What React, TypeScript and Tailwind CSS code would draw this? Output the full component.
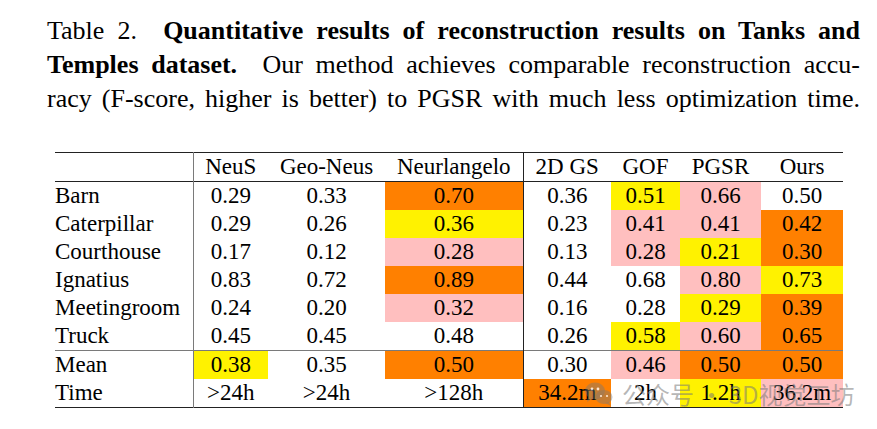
import React from 'react';

type Cell = { v: string; c?: 'o' | 'y' | 'p' };

const cols = ['NeuS', 'Geo-Neus', 'Neurlangelo', '2D GS', 'GOF', 'PGSR', 'Ours'];
const widths = ['w-[138px]', 'w-[75px]', 'w-[117px]', 'w-[138px]', 'w-[88px]', 'w-[69px]', 'w-[81px]', 'w-[82px]'];

const rows: { name: string; cells: Cell[] }[] = [
  { name: 'Barn', cells: [{ v: '0.29' }, { v: '0.33' }, { v: '0.70', c: 'o' }, { v: '0.36' }, { v: '0.51', c: 'y' }, { v: '0.66', c: 'p' }, { v: '0.50' }] },
  { name: 'Caterpillar', cells: [{ v: '0.29' }, { v: '0.26' }, { v: '0.36', c: 'y' }, { v: '0.23' }, { v: '0.41', c: 'p' }, { v: '0.41', c: 'p' }, { v: '0.42', c: 'o' }] },
  { name: 'Courthouse', cells: [{ v: '0.17' }, { v: '0.12' }, { v: '0.28', c: 'p' }, { v: '0.13' }, { v: '0.28', c: 'p' }, { v: '0.21', c: 'y' }, { v: '0.30', c: 'o' }] },
  { name: 'Ignatius', cells: [{ v: '0.83' }, { v: '0.72' }, { v: '0.89', c: 'o' }, { v: '0.44' }, { v: '0.68' }, { v: '0.80', c: 'p' }, { v: '0.73', c: 'y' }] },
  { name: 'Meetingroom', cells: [{ v: '0.24' }, { v: '0.20' }, { v: '0.32', c: 'p' }, { v: '0.16' }, { v: '0.28' }, { v: '0.29', c: 'y' }, { v: '0.39', c: 'o' }] },
  { name: 'Truck', cells: [{ v: '0.45' }, { v: '0.45' }, { v: '0.48' }, { v: '0.26' }, { v: '0.58', c: 'y' }, { v: '0.60', c: 'p' }, { v: '0.65', c: 'o' }] },
];

const summary: { name: string; cells: Cell[] }[] = [
  { name: 'Mean', cells: [{ v: '0.38', c: 'y' }, { v: '0.35' }, { v: '0.50', c: 'o' }, { v: '0.30' }, { v: '0.46', c: 'p' }, { v: '0.50', c: 'o' }, { v: '0.50', c: 'o' }] },
  { name: 'Time', cells: [{ v: '>24h' }, { v: '>24h' }, { v: '>128h' }, { v: '34.2m', c: 'o' }, { v: '2h' }, { v: '1.2h', c: 'y' }, { v: '36.2m', c: 'p' }] },
];

const bg = (c?: string) =>
  c === 'o' ? 'bg-[#ff8000]' : c === 'y' ? 'bg-[#fff200]' : c === 'p' ? 'bg-[#ffbfbf]' : '';

const Row = ({ name, cells, first }: { name: string; cells: Cell[]; first?: boolean }) => (
  <tr className={first ? 'border-t border-[#7a7a7a]' : ''}>
    <td className="h-[28px] p-0 text-left border-r border-[#7a7a7a]">{name}</td>
    {cells.map((cell, i) => (
      <td
        key={i}
        className={`h-[28px] p-0 text-center ${bg(cell.c)} ${i === 2 ? 'border-r border-[#222]' : ''}`}
      >
        {cell.v}
      </td>
    ))}
  </tr>
);

const line = 'block whitespace-nowrap text-justify [text-align-last:justify]';

const App: React.FC = () => {
  return (
    <div className="relative w-[877px] h-[429px] bg-white text-black font-[family-name:'Liberation_Serif',serif]">
      {/* caption */}
      <div className="ml-[47px] pt-[14px] w-[813px] text-[26px] leading-[34px]">
        <span className={line}>
          Table 2.&nbsp; <b>Quantitative results of reconstruction results on Tanks and</b>
        </span>
        <span className={line}>
          <b>Temples dataset.</b>&nbsp; Our method achieves comparable reconstruction accu-
        </span>
        <span className={line}>racy (F-score, higher is better) to PGSR with much less optimization time.</span>
      </div>

      {/* table */}
      <table className="ml-[55px] mt-[36px] border-collapse table-fixed text-[23px] leading-[28px] w-[788px]">
        <colgroup>
          {widths.map((w, i) => (
            <col key={i} className={w} />
          ))}
        </colgroup>
        <thead>
          <tr className="border-t border-b border-[#222]">
            <th className="h-[29px] p-0 font-normal border-r border-[#7a7a7a]"></th>
            {cols.map((c, i) => (
              <th key={c} className={`h-[29px] p-0 font-normal text-center ${i === 2 ? 'border-r border-[#222]' : ''}`}>
                {c}
              </th>
            ))}
          </tr>
        </thead>
        <tbody>
          {rows.map((r) => (
            <Row key={r.name} name={r.name} cells={r.cells} />
          ))}
        </tbody>
        <tbody className="border-b border-[#222]">
          {summary.map((r, i) => (
            <Row key={r.name} name={r.name} cells={r.cells} first={i === 0} />
          ))}
        </tbody>
      </table>

      {/* watermark */}
      <div className="absolute left-[584px] top-[381px] flex items-center gap-[8px] text-[rgba(120,120,120,0.55)] font-[family-name:'Noto_Sans_CJK_SC',sans-serif] text-[24px] leading-[26px] pointer-events-none">
        <svg width="30" height="26" viewBox="0 0 30 26" className="opacity-80">
          <ellipse cx="11" cy="10" rx="10" ry="8.5" fill="rgba(120,120,120,0.55)" />
          <path d="M4 16 L3 21 L9 17 Z" fill="rgba(120,120,120,0.55)" />
          <ellipse cx="20" cy="16" rx="8.5" ry="7" fill="rgba(120,120,120,0.55)" />
          <path d="M25 21 L27 25 L21 22 Z" fill="rgba(120,120,120,0.55)" />
          <circle cx="8" cy="8" r="1.4" fill="#fff" />
          <circle cx="14" cy="8" r="1.4" fill="#fff" />
          <circle cx="17" cy="15" r="1.1" fill="#fff" />
          <circle cx="23" cy="15" r="1.1" fill="#fff" />
        </svg>
        <span>公众号 · 3D视觉工坊</span>
      </div>
    </div>
  );
};

export default App;
